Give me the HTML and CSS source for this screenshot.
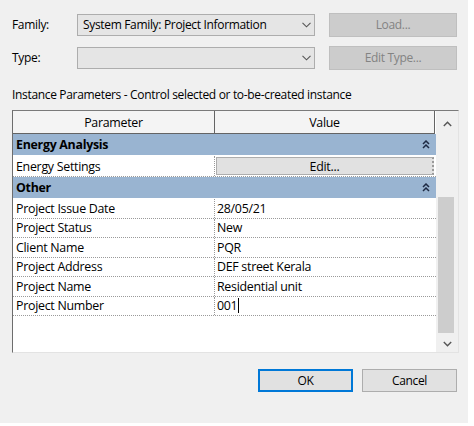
FILE: index.html
```html
<!DOCTYPE html>
<html>
<head>
<meta charset="utf-8">
<link rel="stylesheet" href="styles.css">
</head>
<body>
<div class="dialog">
  <div class="field-row">
    <span class="lbl">Family:</span>
    <div class="combo"><span class="combo-text">System Family: Project Information</span>
      <svg class="chev" width="9" height="6" viewBox="0 0 9 6"><path d="M0.5 0.8 L4.5 4.8 L8.5 0.8" fill="none" stroke="#555" stroke-width="1.1"/></svg>
    </div>
    <div class="btn disabled">Load...</div>
  </div>
  <div class="field-row">
    <span class="lbl">Type:</span>
    <div class="combo"><span class="combo-text"></span>
      <svg class="chev" width="9" height="6" viewBox="0 0 9 6"><path d="M0.5 0.8 L4.5 4.8 L8.5 0.8" fill="none" stroke="#555" stroke-width="1.1"/></svg>
    </div>
    <div class="btn disabled">Edit Type...</div>
  </div>
  <div class="caption">Instance Parameters - Control selected or to-be-created instance</div>
  <div class="listbox">
    <div class="grid">
      <div class="hdr">
        <div class="hc hc1">Parameter</div>
        <div class="hc hc2">Value</div>
      </div>
      <div class="group"><span>Energy Analysis</span>
        <svg class="dchev" width="8" height="9" viewBox="0 0 8 9"><path d="M1 4 L4 1 L7 4 M1 8 L4 5 L7 8" fill="none" stroke="#1e2a44" stroke-width="1.5"/></svg>
      </div>
      <div class="row row-tall">
        <div class="c1">Energy Settings</div>
        <div class="c2 c2-btn"><div class="editbtn">Edit...</div></div>
      </div>
      <div class="group"><span>Other</span>
        <svg class="dchev" width="8" height="9" viewBox="0 0 8 9"><path d="M1 4 L4 1 L7 4 M1 8 L4 5 L7 8" fill="none" stroke="#1e2a44" stroke-width="1.5"/></svg>
      </div>
      <div class="row"><div class="c1">Project Issue Date</div><div class="c2">28/05/21</div></div>
      <div class="row"><div class="c1">Project Status</div><div class="c2">New</div></div>
      <div class="row"><div class="c1">Client Name</div><div class="c2">PQR</div></div>
      <div class="row"><div class="c1">Project Address</div><div class="c2">DEF street Kerala</div></div>
      <div class="row"><div class="c1">Project Name</div><div class="c2">Residential unit</div></div>
      <div class="row"><div class="c1">Project Number</div><div class="c2">001<span class="caret"></span></div></div>
    </div>
    <div class="scrollbar">
      <div class="arrow arrow-up">
        <svg width="9" height="6" viewBox="0 0 9 6"><path d="M0.8 5 L4.5 1.3 L8.2 5" fill="none" stroke="#555" stroke-width="1.4"/></svg>
      </div>
      <div class="track"><div class="thumb"></div></div>
      <div class="arrow arrow-down">
        <svg width="9" height="6" viewBox="0 0 9 6"><path d="M0.8 1 L4.5 4.7 L8.2 1" fill="none" stroke="#555" stroke-width="1.4"/></svg>
      </div>
    </div>
  </div>
  <div class="footer">
    <div class="btn2 ok">OK</div>
    <div class="btn2">Cancel</div>
  </div>
</div>
</body>
</html>
```

FILE: styles.css
```css
html, body {
  margin: 0;
  padding: 0;
  background: #ffffff;
}

.dialog {
  width: 468px;
  height: 423px;
  box-sizing: border-box;
  background: #f0f0f0;
  padding: 13px 11px 0 12px;
  font-family: "Open Sans", "Noto Sans", sans-serif;
  font-size: 12px;
  letter-spacing: -0.33px;
  color: #000;
}

.field-row {
  display: flex;
  align-items: center;
  height: 23px;
  margin-bottom: 10px;
}

.lbl {
  width: 65px;
}

.combo {
  width: 238px;
  height: 22px;
  box-sizing: border-box;
  border: 1px solid #adadad;
  background: #e5e5e5;
  display: flex;
  align-items: center;
  justify-content: space-between;
  padding: 0 3px 0 5px;
}

.btn {
  width: 128px;
  height: 24px;
  box-sizing: border-box;
  margin-left: 14px;
  display: flex;
  align-items: center;
  justify-content: center;
  border: 1px solid #bfbfbf;
  background: #cccccc;
}

.btn.disabled {
  color: #838383;
}

.caption {
  margin-top: 18px;
  height: 16px;
  line-height: 16px;
}

.listbox {
  margin-top: 7px;
  width: 447px;
  height: 243px;
  box-sizing: border-box;
  border-top: 1px solid #7a7a7a;
  border-left: 1px solid #6d6d6d;
  border-right: 1px solid #e3e3e3;
  border-bottom: 1px solid #e3e3e3;
  background: #ffffff;
  display: flex;
}

.grid {
  width: 423px;
  display: flex;
  flex-direction: column;
  font-size: 12.4px;
  letter-spacing: -0.28px;
}

.hdr {
  display: flex;
  height: 23px;
  box-sizing: border-box;
  border-bottom: 1px solid #646464;
  background: #f4f4f4;
  width: 422px;
}

.hc {
  display: flex;
  align-items: center;
  justify-content: center;
  box-sizing: border-box;
  border-right: 1px solid #646464;
}

.hc1 {
  width: 202px;
}

.hc2 {
  width: 220px;
}

.group {
  height: 22px;
  box-sizing: border-box;
  border-bottom: 1px solid #ffffff;
  background: #99b4d1;
  font-weight: bold;
  display: flex;
  align-items: center;
  justify-content: space-between;
  padding: 0 6px 0 3px;
}

.row {
  display: flex;
  height: 19.5px;
  box-sizing: border-box;
  border-bottom: 1px dotted #9a9a9a;
}

.row-tall {
  height: 21px;
}

.c1 {
  width: 202px;
  box-sizing: border-box;
  border-right: 1px dotted #9a9a9a;
  padding-left: 3px;
  display: flex;
  align-items: center;
}

.c2 {
  flex: 1;
  padding-left: 2px;
  display: flex;
  align-items: center;
}

.c2-btn {
  padding: 1px 2px 1px 1px;
}

.editbtn {
  flex: 1;
  height: 100%;
  box-sizing: border-box;
  background: #e1e1e1;
  border: 1px solid #adadad;
  border-right: 2px dotted #9a9a9a;
  display: flex;
  align-items: center;
  justify-content: center;
}

.caret {
  display: inline-block;
  width: 1px;
  height: 15px;
  background: #000;
  margin-left: 1px;
}

.scrollbar {
  flex: 1;
  background: #f0f0f0;
  display: flex;
  flex-direction: column;
}

.arrow {
  display: flex;
  align-items: center;
  justify-content: center;
}

.arrow-up {
  height: 26px;
}

.track {
  flex: 1;
  padding: 0 4px 0 2px;
}

.thumb {
  margin-top: 60px;
  height: 136px;
  background: #cdcdcd;
}

.arrow-down {
  height: 17px;
}

.footer {
  margin-top: 16px;
  display: flex;
  justify-content: flex-end;
  gap: 9px;
}

.btn2 {
  width: 95px;
  height: 23px;
  box-sizing: border-box;
  border: 1px solid #adadad;
  background: #e1e1e1;
  display: flex;
  align-items: center;
  justify-content: center;
}

.btn2.ok {
  border: 2px solid #0078d7;
}
```
